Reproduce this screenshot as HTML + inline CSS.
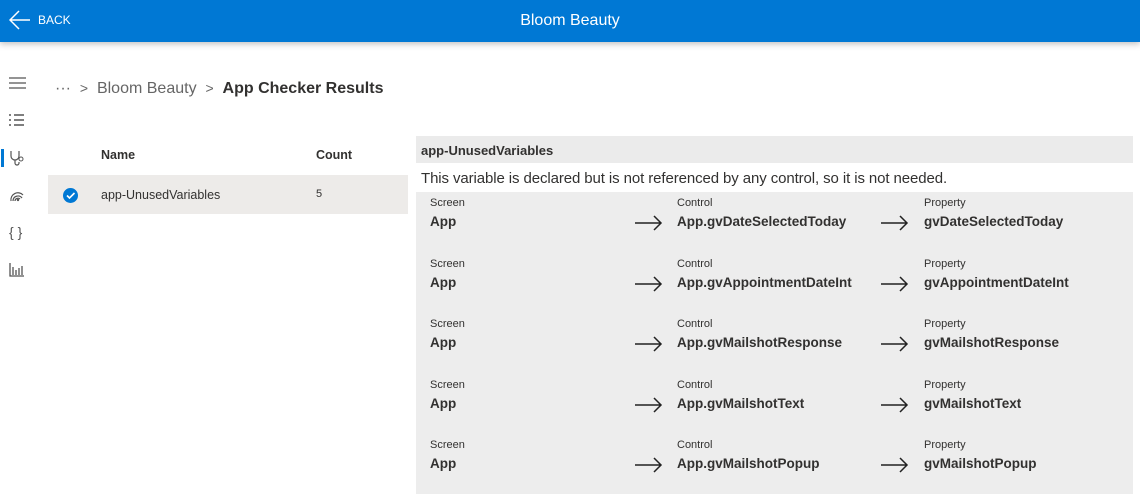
<!DOCTYPE html>
<html><head><style>
*{margin:0;padding:0;box-sizing:border-box}
body{width:1140px;height:501px;background:#fff;font-family:"Liberation Sans",sans-serif;color:#323130;position:relative;overflow:hidden}
.hdr{position:absolute;left:0;top:0;width:1140px;height:42px;background:#0078d4;box-shadow:0 2px 6px rgba(0,0,0,.25);color:#fff}
.abs{position:absolute;white-space:nowrap}
.lbl{font-size:11px;color:#323130}
.val{font-size:13.5px;font-weight:bold;color:#323130}
.arr{position:absolute}
</style></head><body>
<div class="hdr">
<svg class="abs" style="left:9px;top:10px" width="22" height="20" viewBox="0 0 22 20"><path d="M21 10H2M10 1L1 10l9 9" stroke="#fff" stroke-width="1.5" fill="none"/></svg>
<div class="abs" style="left:38px;top:13px;font-size:12px">BACK</div>
<div class="abs" style="left:0;width:1140px;text-align:center;top:12px;font-size:16px">Bloom Beauty</div>
</div>
<svg class="abs" style="left:9px;top:77px" width="18" height="12"><path d="M0 1h17M0 6h17M0 11h17" stroke="#555" stroke-width="1.2"/></svg>
<svg class="abs" style="left:9px;top:114px" width="16" height="14"><path d="M0 1h2M0 6h2M0 11h2M5 1h10M5 6h10M5 11h10" stroke="#555" stroke-width="1.5"/></svg>
<div class="abs" style="left:1px;top:149px;width:3px;height:18px;background:#0078d4"></div>
<svg class="abs" style="left:9px;top:150px" width="16" height="16"><path d="M2 1v5a4 4 0 0 0 8 0V1M6 10v3a2 2 0 0 0 4 0v-1" stroke="#555" stroke-width="1.2" fill="none"/><circle cx="12" cy="9" r="2" stroke="#555" fill="none"/></svg>
<svg class="abs" style="left:9px;top:189px" width="16" height="16"><path d="M2 12a7 7 0 0 1 12-6M4 12a5 5 0 0 1 9-3M6 12a3 3 0 0 1 5-2" stroke="#555" stroke-width="1.2" fill="none"/><circle cx="9" cy="11" r="1.2" fill="#555"/></svg>
<div class="abs" style="left:9px;top:224px;font-size:14px;color:#555">{ }</div>
<svg class="abs" style="left:9px;top:263px" width="16" height="14"><path d="M1 0v13h14M4 4v8M7 7v5M10 5v7M13 3v9" stroke="#555" stroke-width="1.3" fill="none"/></svg>
<div class="abs" style="left:55px;top:80px;font-size:16px;color:#666">···&nbsp;&nbsp;<span style="font-size:14px">&gt;</span>&nbsp;&nbsp;Bloom Beauty&nbsp;&nbsp;<span style="font-size:14px">&gt;</span>&nbsp;&nbsp;<b style="color:#323130">App Checker Results</b></div>
<div class="abs" style="left:101px;top:148px;font-size:12.5px;font-weight:bold;color:#323130">Name</div>
<div class="abs" style="left:316px;top:148px;font-size:12.5px;font-weight:bold;color:#323130">Count</div>
<div class="abs" style="left:48px;top:175px;width:360px;height:39px;background:#edebe9"></div>
<svg class="abs" style="left:63px;top:188px" width="15" height="15"><circle cx="7.5" cy="7.5" r="7.5" fill="#0078d4"/><path d="M4 7.5l2.5 2.5 5-5" stroke="#fff" stroke-width="1.6" fill="none"/></svg>
<div class="abs" style="left:101px;top:188px;font-size:12.5px">app-UnusedVariables</div>
<div class="abs" style="left:316px;top:188px;font-size:11px">5</div>
<div class="abs" style="left:416px;top:136px;width:717px;height:27px;background:#ebebeb"></div>
<div class="abs" style="left:421px;top:143px;font-size:13px;font-weight:bold">app-UnusedVariables</div>
<div class="abs" style="left:421px;top:170px;font-size:15px;letter-spacing:-0.1px">This variable is declared but is not referenced by any control, so it is not needed.</div>
<div class="abs" style="left:416px;top:192px;width:717px;height:302px;background:#ededed"></div>
<div id="rows"></div>
<script>
var d=[["App.gvDateSelectedToday","gvDateSelectedToday"],["App.gvAppointmentDateInt","gvAppointmentDateInt"],["App.gvMailshotResponse","gvMailshotResponse"],["App.gvMailshotText","gvMailshotText"],["App.gvMailshotPopup","gvMailshotPopup"]];
var h="";
d.forEach(function(r,i){var y=197+i*60.5;
h+='<div class="abs lbl" style="left:430px;top:'+y+'px">Screen</div><div class="abs val" style="left:430px;top:'+(y+17)+'px">App</div>';
h+='<svg class="arr" style="left:635px;top:'+(y+18)+'px" width="28" height="16"><path d="M0 8h26M19 1l7 7-7 7" stroke="#222" stroke-width="1.5" fill="none"/></svg>';
h+='<div class="abs lbl" style="left:677px;top:'+y+'px">Control</div><div class="abs val" style="left:677px;top:'+(y+17)+'px">'+r[0]+'</div>';
h+='<svg class="arr" style="left:881px;top:'+(y+18)+'px" width="28" height="16"><path d="M0 8h26M19 1l7 7-7 7" stroke="#222" stroke-width="1.5" fill="none"/></svg>';
h+='<div class="abs lbl" style="left:924px;top:'+y+'px">Property</div><div class="abs val" style="left:924px;top:'+(y+17)+'px">'+r[1]+'</div>';});
document.getElementById("rows").innerHTML=h;
</script>
</body></html>
